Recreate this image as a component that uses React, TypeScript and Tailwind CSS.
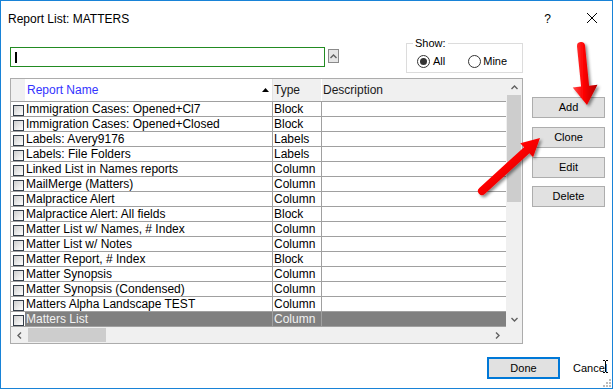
import React from "react";

type Row = { name: string; type: string };

const rows: Row[] = [
  { name: "Immigration Cases: Opened+Cl7", type: "Block" },
  { name: "Immigration Cases: Opened+Closed", type: "Block" },
  { name: "Labels: Avery9176", type: "Labels" },
  { name: "Labels: File Folders", type: "Labels" },
  { name: "Linked List in Names reports", type: "Column" },
  { name: "MailMerge (Matters)", type: "Column" },
  { name: "Malpractice Alert", type: "Column" },
  { name: "Malpractice Alert: All fields", type: "Block" },
  { name: "Matter List w/ Names, # Index", type: "Column" },
  { name: "Matter List w/ Notes", type: "Column" },
  { name: "Matter Report, # Index", type: "Block" },
  { name: "Matter Synopsis", type: "Column" },
  { name: "Matter Synopsis (Condensed)", type: "Column" },
  { name: "Matters Alpha Landscape TEST", type: "Column" },
  { name: "Matters List", type: "Column" },
];

// small scrollbar chevrons
const Chevron = ({ dir }: { dir: "up" | "down" | "left" | "right" }) => {
  const d = {
    up: "M0.5 4 L3.5 1 L6.5 4",
    down: "M0.5 1 L3.5 4 L6.5 1",
    left: "M4 0.5 L1 3.5 L4 6.5",
    right: "M1 0.5 L4 3.5 L1 6.5",
  }[dir];
  const horiz = dir === "up" || dir === "down";
  return (
    <svg width={horiz ? 7 : 5} height={horiz ? 5 : 7} viewBox={horiz ? "0 0 7 5" : "0 0 5 7"}>
      <path d={d} fill="none" stroke="#606060" strokeWidth="1.4" />
    </svg>
  );
};

const Radio = ({ checked }: { checked?: boolean }) => (
  <span className="w-[13px] h-[13px] rounded-full border border-[#333] bg-white flex items-center justify-center shrink-0">
    {checked && <span className="w-[7px] h-[7px] rounded-full bg-[#333]" />}
  </span>
);

const SideButton = ({ label, className = "" }: { label: string; className?: string }) => (
  <div
    className={`w-[73px] h-[21px] border border-[#adadad] bg-[#e1e1e1] flex items-center justify-center text-[11px] leading-[13px] ${className}`}
  >
    {label}
  </div>
);

const Arrows = () => (
  <svg className="absolute inset-0 pointer-events-none" width="616" height="390" viewBox="0 0 616 390">
    <defs>
      <filter id="sh" x="-30%" y="-30%" width="160%" height="160%">
        <feDropShadow dx="2" dy="2" stdDeviation="1.4" floodColor="#000" floodOpacity="0.45" />
      </filter>
      <linearGradient id="g1" x1="0" y1="0" x2="1" y2="0">
        <stop offset="0" stopColor="#ff4a4a" />
        <stop offset="0.45" stopColor="#ff0000" />
        <stop offset="1" stopColor="#b00000" />
      </linearGradient>
      <linearGradient id="g2" x1="0" y1="0" x2="1" y2="1">
        <stop offset="0" stopColor="#ff4a4a" />
        <stop offset="0.45" stopColor="#ff0000" />
        <stop offset="1" stopColor="#b00000" />
      </linearGradient>
    </defs>
    <path
      filter="url(#sh)"
      fill="url(#g1)"
      d="M577 46.4 A4 4 0 0 1 585 45.6 L589.1 85.7 L597.5 84.8 L587 105 L572.7 87.4 L581.1 86.5 Z"
    />
    <path
      filter="url(#sh)"
      fill="url(#g2)"
      d="M479.3 188 L524 147.2 L520.3 143.2 L540 138 L533.1 157.2 L529.4 153.2 L484.7 194 A4 4 0 0 1 479.3 188 Z"
    />
  </svg>
);

export default function App() {
  return (
    <div className="relative w-[616px] h-[390px] bg-white overflow-hidden font-['Liberation_Sans',Arial,sans-serif] text-black">
      <div className="relative w-[613px] h-[389px] border border-[#1883d7] bg-white flex flex-col overflow-hidden">
        {/* title bar */}
        <div className="h-[30px] shrink-0 flex items-start">
          <span className="ml-[7px] mt-[11px] text-[12px] leading-[14px]">Report List: MATTERS</span>
          <span className="ml-auto mt-[11px] text-[12px] leading-[14px]">?</span>
          <svg className="ml-[36px] mt-[12px] mr-[15px]" width="10" height="10" viewBox="0 0 10 10">
            <path d="M0 0 L10 10 M10 0 L0 10" stroke="#000" strokeWidth="1" />
          </svg>
        </div>

        {/* body */}
        <div className="flex flex-col pl-[9px]">
          <div className="flex">
            {/* left column */}
            <div className="w-[513px] flex flex-col">
              <div className="h-[47px] flex items-start">
                <div className="mt-[16px] w-[315px] h-[20px] border border-[#228b22] bg-white flex items-center">
                  <div className="ml-[4px] w-[2px] h-[11px] bg-black" />
                </div>
                <div className="mt-[18px] ml-[3px] w-[11px] h-[14px] border border-[#8a8a8a] bg-[#e6e6e6] flex items-center justify-center">
                  <Chevron dir="up" />
                </div>
                <fieldset className="ml-auto mt-[5px] w-[117px] h-[37px] border border-[#dcdcdc] pl-[6px]">
                  <legend className="px-[2px] text-[11px] leading-[14px]">Show:</legend>
                  <div className="flex items-center mt-[5px] ml-[4px] text-[11px] leading-[13px]">
                    <Radio checked />
                    <span className="ml-[3px]">All</span>
                    <span className="ml-[23px]">
                      <Radio />
                    </span>
                    <span className="ml-[2px]">Mine</span>
                  </div>
                </fieldset>
              </div>

              {/* list */}
              <div className="w-[513px] h-[266px] border border-[#acacac] flex flex-col">
                <div className="flex h-[248px]">
                  <div className="w-[495px] flex flex-col overflow-hidden text-[12px]">
                    <div className="h-[23px] shrink-0 flex border-b border-[#a0a0a0] leading-[22px]">
                      <div className="w-[14px] bg-[#f0f0f0]" />
                      <div className="w-[248px] bg-white border-r border-[#e3e3e3] flex items-center pl-[2px] text-[#3333ff]">
                        <span>Report Name</span>
                        <svg className="ml-auto mr-[3px]" width="7" height="4" viewBox="0 0 7 4">
                          <polygon points="0,4 3.5,0 7,4" fill="#000" />
                        </svg>
                      </div>
                      <div className="w-[49px] bg-[#f0f0f0] border-r border-white pl-[1px] text-[#1a1a1a]">Type</div>
                      <div className="flex-1 bg-[#f0f0f0] pl-[1px] text-[#1a1a1a]">Description</div>
                    </div>
                    {rows.map((r, i) => {
                      const sel = i === rows.length - 1;
                      return (
                        <div key={r.name} className="h-[15px] shrink-0 flex border-b border-[#a0a0a0] leading-[14px] whitespace-nowrap">
                          <div className="w-[14px] bg-white">
                            <div className="ml-[2px] mt-[3px] w-[11px] h-[11px] border border-[#333c48] bg-[linear-gradient(135deg,#cfcfcf,#ffffff)]" />
                          </div>
                          <div className={`w-[248px] border-r border-[#a0a0a0] pl-[1px] overflow-hidden ${sel ? "bg-[#808080] text-[#f2f2f2]" : ""}`}>
                            {r.name}
                          </div>
                          <div className={`w-[49px] border-r border-[#a0a0a0] pl-[1px] overflow-hidden ${sel ? "bg-[#808080] text-[#f2f2f2]" : ""}`}>
                            {r.type}
                          </div>
                          <div className={`flex-1 ${sel ? "bg-[#808080]" : ""}`} />
                        </div>
                      );
                    })}
                  </div>
                  {/* vertical scrollbar */}
                  <div className="w-[16px] bg-[#f0f0f0] flex flex-col">
                    <div className="h-[16px] flex items-center justify-center">
                      <Chevron dir="up" />
                    </div>
                    <div className="mx-[1px] h-[107px] bg-[#cdcdcd]" />
                    <div className="flex-1" />
                    <div className="h-[16px] flex items-center justify-center">
                      <Chevron dir="down" />
                    </div>
                  </div>
                </div>
                {/* horizontal scrollbar */}
                <div className="h-[16px] bg-[#f0f0f0] flex items-center">
                  <div className="w-[17px] flex items-center justify-center">
                    <Chevron dir="left" />
                  </div>
                  <div className="w-[78px] h-[14px] bg-[#cdcdcd]" />
                  <div className="flex-1" />
                  <div className="w-[17px] flex items-center justify-center">
                    <Chevron dir="right" />
                  </div>
                  <div className="w-[16px]" />
                </div>
              </div>
            </div>

            {/* right buttons */}
            <div className="ml-[9px] flex flex-col pt-[66px]">
              <SideButton label="Add" />
              <SideButton label="Clone" className="mt-[9px]" />
              <SideButton label="Edit" className="mt-[9px]" />
              <SideButton label="Delete" className="mt-[8px]" />
            </div>
          </div>

          {/* bottom buttons */}
          <div className="mt-[13px] flex justify-end items-center gap-[12px]">
            <div className="w-[73px] h-[22px] border-2 border-[#0078d7] bg-[#e1e1e1] flex items-center justify-center text-[11px] leading-[13px]">
              Done
            </div>
            <div className="relative w-[40px] pl-[1px] text-[11px] leading-[13px] whitespace-nowrap">
              Cancel
              <svg className="absolute left-[31px] top-[-2px]" width="5" height="13" viewBox="0 0 5 13">
                <path d="M0 0.5 H2 M3 0.5 H5 M2.5 1 V12 M0 12.5 H2 M3 12.5 H5" stroke="#000" strokeWidth="1" />
              </svg>
            </div>
          </div>
        </div>

        {/* resize grip */}
        <svg className="absolute right-[1px] bottom-[1px]" width="8" height="8" viewBox="0 0 8 8">
          <rect x="6" y="0" width="2" height="2" fill="#bcbcbc" />
          <rect x="3" y="3" width="2" height="2" fill="#bcbcbc" />
          <rect x="6" y="3" width="2" height="2" fill="#bcbcbc" />
          <rect x="0" y="6" width="2" height="2" fill="#bcbcbc" />
          <rect x="3" y="6" width="2" height="2" fill="#bcbcbc" />
          <rect x="6" y="6" width="2" height="2" fill="#bcbcbc" />
        </svg>
      </div>
      <Arrows />
    </div>
  );
}
